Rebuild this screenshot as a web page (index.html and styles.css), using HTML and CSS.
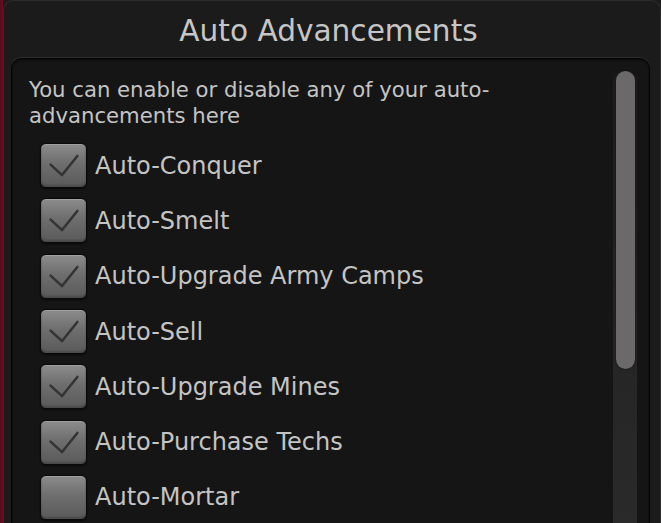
FILE: index.html
```html
<!DOCTYPE html>
<html>
<head>
<meta charset="utf-8">
<link rel="stylesheet" href="styles.css">
</head>
<body>
<div class="dialog">
  <h1 class="title">Auto Advancements</h1>
  <div class="panel">
    <div class="content">
      <p class="desc">You can enable or disable any of your auto-<br>advancements here</p>
      <ul class="list">
        <li class="row"><span class="box checked"><svg viewBox="0 0 47 44"><path d="M10 21 L22 32 L38 12"/></svg></span><span class="label">Auto-Conquer</span></li>
        <li class="row"><span class="box checked"><svg viewBox="0 0 47 44"><path d="M10 21 L22 32 L38 12"/></svg></span><span class="label">Auto-Smelt</span></li>
        <li class="row"><span class="box checked"><svg viewBox="0 0 47 44"><path d="M10 21 L22 32 L38 12"/></svg></span><span class="label">Auto-Upgrade Army Camps</span></li>
        <li class="row"><span class="box checked"><svg viewBox="0 0 47 44"><path d="M10 21 L22 32 L38 12"/></svg></span><span class="label">Auto-Sell</span></li>
        <li class="row"><span class="box checked"><svg viewBox="0 0 47 44"><path d="M10 21 L22 32 L38 12"/></svg></span><span class="label">Auto-Upgrade Mines</span></li>
        <li class="row"><span class="box checked"><svg viewBox="0 0 47 44"><path d="M10 21 L22 32 L38 12"/></svg></span><span class="label">Auto-Purchase Techs</span></li>
        <li class="row"><span class="box"></span><span class="label">Auto-Mortar</span></li>
      </ul>
    </div>
    <div class="track"><div class="thumb"></div></div>
  </div>
</div>
</body>
</html>
```
FILE: styles.css
```css
html, body {
  margin: 0;
  padding: 0;
  height: 100%;
  overflow: hidden;
}
body {
  background: linear-gradient(90deg, #5a0a1c 0, #6a0c22 3px, #1b1b1b 3px);
  font-family: "DejaVu Sans", Verdana, sans-serif;
  color: #c4c4c4;
}
.dialog {
  margin-left: 3px;
  height: 540px;
  background: #1b1b1b;
  border: 1px solid #2c2c2c;
  border-bottom: none;
  border-radius: 10px 10px 0 0;
  padding: 0 10px 0 7px;
  box-sizing: border-box;
  display: flex;
  flex-direction: column;
}
.title {
  margin: 0;
  height: 57px;
  font-size: 29.6px;
  font-weight: normal;
  line-height: 60px;
  text-align: center;
  color: #c6c6c6;
  padding-right: 4px;
}
.panel {
  flex: 1;
  background: #151515;
  border: 1px solid #050505;
  border-radius: 10px 10px 0 0;
  box-shadow: 0 -1px 0 #2e2e2e, inset 0 1px 2px rgba(0,0,0,0.6);
  display: flex;
  position: relative;
}
.content {
  flex: 1;
  padding: 18px 0 0 17px;
}
.desc {
  margin: 0;
  font-size: 21.2px;
  line-height: 26px;
  color: #c4c4c4;
}
.list {
  list-style: none;
  margin: 9px 0 0 11px;
  padding: 0;
}
.row {
  display: flex;
  align-items: center;
  height: 55.3px;
}
.box {
  width: 45px;
  height: 43px;
  border: 1px solid #0a0a0a;
  border-radius: 6px;
  background: linear-gradient(180deg, #8c8c8c 0%, #6e6e6e 45%, #5a5a5a 100%);
  box-shadow: inset 0 1px 0 #a0a0a0, inset 0 -2px 2px #4a4a4a, 0 1px 2px rgba(0,0,0,0.7);
  margin-right: 8px;
  flex: none;
  display: flex;
}
.box svg {
  width: 45px;
  height: 43px;
}
.box path {
  fill: none;
  stroke: #333333;
  stroke-width: 2.6;
  stroke-linecap: round;
  stroke-linejoin: round;
}
.label {
  font-size: 24px;
  color: #c4c4c4;
  line-height: 30px;
}
.track {
  width: 24px;
  margin: 12px 12px 0 0;
  background: linear-gradient(180deg, #1d1d1d 0, #262626 300px, #2a2a2a 100%);
  border-radius: 10px 10px 0 0;
  display: flex;
  justify-content: center;
}
.thumb {
  width: 19px;
  height: 298px;
  background: #6b696a;
  border-radius: 10px;
  box-shadow: 0 0 2px rgba(0,0,0,0.6);
}
```
